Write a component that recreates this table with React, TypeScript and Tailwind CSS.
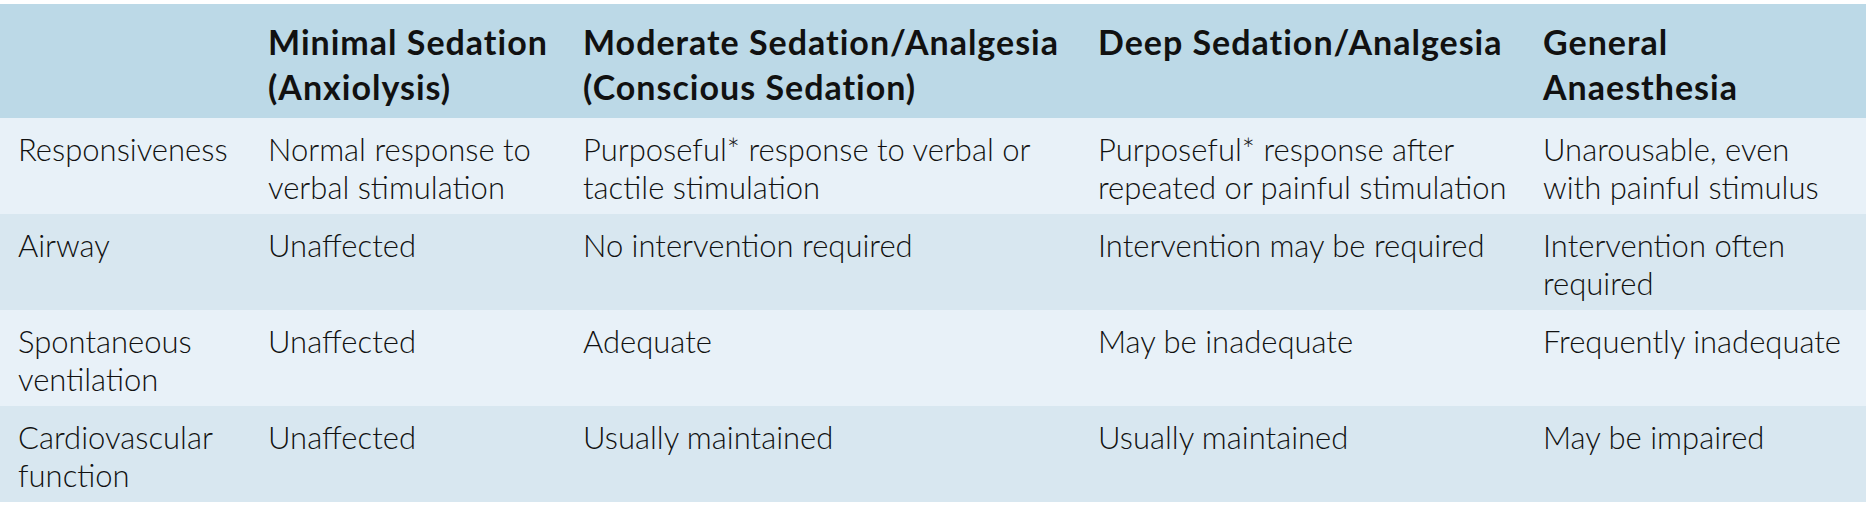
const headers = [
  [''],
  ['Minimal Sedation', '(Anxiolysis)'],
  ['Moderate Sedation/Analgesia', '(Conscious Sedation)'],
  ['Deep Sedation/Analgesia'],
  ['General', 'Anaesthesia'],
];

const rows = [
  [
    ['Responsiveness'],
    ['Normal response to', 'verbal stimulation'],
    ['Purposeful* response to verbal or', 'tactile stimulation'],
    ['Purposeful* response after', 'repeated or painful stimulation'],
    ['Unarousable, even', 'with painful stimulus'],
  ],
  [['Airway'], ['Unaffected'], ['No intervention required'], ['Intervention may be required'], ['Intervention often', 'required']],
  [['Spontaneous', 'ventilation'], ['Unaffected'], ['Adequate'], ['May be inadequate'], ['Frequently inadequate']],
  [['Cardiovascular', 'function'], ['Unaffected'], ['Usually maintained'], ['Usually maintained'], ['May be impaired']],
];

const cols = 'grid grid-cols-[250px_315px_515px_445px_1fr]';

function Lines({ lines }: { lines: string[] }) {
  return (
    <>
      {lines.map((l, i) => (
        <div key={i} className="whitespace-nowrap">
          {l}
        </div>
      ))}
    </>
  );
}

export default function App() {
  return (
    <div className="w-[1866px] h-[515px] bg-white pt-[4px] font-['Lato','Open_Sans',sans-serif] text-[#111]">
      <div className={`${cols} bg-[#bcd9e7]`}>
        {headers.map((h, i) => (
          <div key={i} className="pl-[18px] pt-[15px] pb-[9px] text-[34px] leading-[45px] tracking-[1px] font-bold">
            <Lines lines={h} />
          </div>
        ))}
      </div>
      {rows.map((r, ri) => (
        <div key={ri} className={`${cols} ${ri % 2 === 0 ? 'bg-[#e8f1f8]' : 'bg-[#d8e7f0]'}`}>
          {r.map((c, ci) => (
            <div key={ci} className="pl-[18px] pt-[12px] pb-[8px] min-h-[96px] text-[31px] leading-[38px] font-light">
              <Lines lines={c} />
            </div>
          ))}
        </div>
      ))}
    </div>
  );
}
